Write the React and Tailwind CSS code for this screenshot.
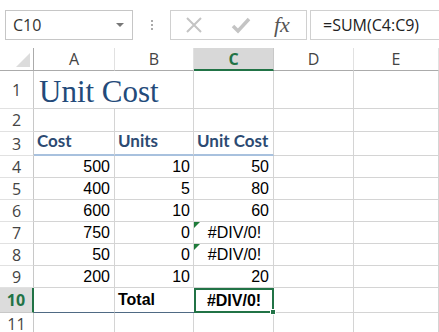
import React from 'react';

const GRID = 'border-r border-b border-[#d4d4d4]';
const NUM = "font-['Liberation_Sans',Arial,sans-serif] text-[16px] text-black";
const COLS = [
    { key: 'A', w: 'w-[81px]' },
    { key: 'B', w: 'w-[79px]' },
    { key: 'C', w: 'w-[80px]' },
    { key: 'D', w: 'w-[80px]' },
    { key: 'E', w: 'w-[85px]' },
];

const data = [
    ['500', '10', '50'],
    ['400', '5', '80'],
    ['600', '10', '60'],
    ['750', '0', '#DIV/0!'],
    ['50', '0', '#DIV/0!'],
    ['200', '10', '20'],
];

const RowHead = ({ n, h, active }) => (
    <div
        className={`${h} w-[34px] shrink-0 flex items-center justify-center border-b font-['Open_Sans',sans-serif] text-[16px] ${
            active
                ? 'bg-[#dcdcdc] text-[#217346] font-bold border-r-2 border-r-[#217346] border-b-[#c8c8c8]'
                : 'bg-white text-[#444] border-r border-[#c8c8c8] border-b-[#e1e1e1]'
        }`}
    >
        {n}
    </div>
);

const ErrTri = () => (
    <span className="absolute left-0 top-0 w-0 h-0 border-t-[6px] border-t-[#1e7b3a] border-r-[6px] border-r-transparent" />
);

export default function App() {
    return (
        <div className="w-[439px] h-[332px] overflow-hidden bg-white select-none">
            {/* formula bar */}
            <div className="h-[48px] flex items-start pt-[10px]">
                <div className="ml-[5px] w-[128px] h-[30px] border border-[#c6c6c6] flex items-center justify-between pl-[7px] pr-[8px]">
                    <span className="font-['Open_Sans',sans-serif] text-[16px] text-[#333]">C10</span>
                    <span className="w-0 h-0 border-l-[4px] border-r-[4px] border-t-[4px] border-l-transparent border-r-transparent border-t-[#777]" />
                </div>
                <div className="w-[37px] h-[30px] flex flex-col items-center justify-center gap-[2px]">
                    <span className="w-[2px] h-[2px] bg-[#aaa]" />
                    <span className="w-[2px] h-[2px] bg-[#aaa]" />
                    <span className="w-[2px] h-[2px] bg-[#aaa]" />
                </div>
                <div className="w-[137px] h-[30px] border border-[#d0d0d0] flex items-center">
                    <svg width="20" height="20" viewBox="0 0 20 20" className="ml-[13px]">
                        <path d="M3 3 L17 17 M17 3 L3 17" stroke="#c4c4c4" strokeWidth="2" fill="none" />
                    </svg>
                    <svg width="22" height="20" viewBox="0 0 22 20" className="ml-[26px]">
                        <path d="M3 11 L8 16 L19 4" stroke="#c4c4c4" strokeWidth="3.5" fill="none" />
                    </svg>
                    <span className="ml-[22px] font-['Liberation_Serif',serif] italic text-[22px] text-[#555] leading-none">
                        fx
                    </span>
                </div>
                <div className="ml-[3px] flex-1 h-[30px] border border-r-0 border-[#d0d0d0] flex items-center pl-[12px]">
                    <span className="font-['Open_Sans',sans-serif] text-[16px] text-[#222]">=SUM(C4:C9)</span>
                </div>
            </div>

            {/* column headers */}
            <div className="flex h-[23px]">
                <div className="w-[34px] shrink-0 relative border-r border-b border-[#ababab] bg-white">
                    <span className="absolute right-[3px] bottom-[3px] w-0 h-0 border-l-[14px] border-l-transparent border-b-[14px] border-b-[#dcdcdc]" />
                </div>
                {COLS.map((c) => (
                    <div
                        key={c.key}
                        className={`${c.w} shrink-0 flex items-center justify-center font-['Open_Sans',sans-serif] text-[16px] ${
                            c.key === 'C'
                                ? 'bg-[#d8d8d8] text-[#217346] font-bold border-b-2 border-b-[#217346] border-r border-r-[#c8c8c8]'
                                : 'bg-white text-[#444] border-r border-r-[#e1e1e1] border-b border-b-[#ababab]'
                        }`}
                    >
                        {c.key}
                    </div>
                ))}
            </div>

            {/* row 1 */}
            <div className="flex h-[38px]">
                <RowHead n="1" h="h-[38px]" />
                <div className="flex-1 flex">
                    <div className={`w-[81px] ${GRID} border-r-0 relative`}>
                        <span className="absolute left-[5px] bottom-[1px] whitespace-nowrap font-['Liberation_Serif',Cambria,serif] text-[31px] leading-none text-[#234a7a]">
                            Unit Cost
                        </span>
                    </div>
                    <div className={`w-[79px] ${GRID}`} />
                    <div className={`w-[80px] ${GRID}`} />
                    <div className={`w-[80px] ${GRID}`} />
                    <div className={`w-[85px] ${GRID}`} />
                </div>
            </div>

            {/* row 2 */}
            <div className="flex h-[23px]">
                <RowHead n="2" h="h-[23px]" />
                {COLS.map((c) => (
                    <div key={c.key} className={`${c.w} ${GRID}`} />
                ))}
            </div>

            {/* row 3 */}
            <div className="flex h-[24px]">
                <RowHead n="3" h="h-[24px]" />
                {['Cost', 'Units', 'Unit Cost'].map((t, i) => (
                    <div
                        key={t}
                        className={`${COLS[i].w} border-r border-r-[#d4d4d4] border-b-2 border-b-[#a8c1de] flex items-end pb-[1px] pl-[3px] font-['Lato',sans-serif] font-bold text-[17px] text-[#2c4a72]`}
                    >
                        {t}
                    </div>
                ))}
                <div className={`w-[80px] ${GRID}`} />
                <div className={`w-[85px] ${GRID}`} />
            </div>

            {/* rows 4-9 */}
            {data.map((r, i) => (
                <div key={i} className="flex h-[22px]">
                    <RowHead n={String(i + 4)} h="h-[22px]" />
                    <div className={`w-[81px] ${GRID} flex items-center justify-end pr-[4px] ${NUM}`}>{r[0]}</div>
                    <div className={`w-[79px] ${GRID} flex items-center justify-end pr-[3px] ${NUM}`}>{r[1]}</div>
                    <div
                        className={`w-[80px] ${GRID} relative flex items-center ${
                            r[2].startsWith('#') ? 'justify-center pl-[2px]' : 'justify-end pr-[4px]'
                        } ${NUM}`}
                    >
                        {r[2].startsWith('#') && <ErrTri />}
                        {r[2]}
                    </div>
                    <div className={`w-[80px] ${GRID}`} />
                    <div className={`w-[85px] ${GRID}`} />
                </div>
            ))}

            {/* row 10 */}
            <div className="flex h-[25px]">
                <RowHead n="10" h="h-[25px]" active />
                <div className="w-[81px] border-b border-b-[#4f6a84] border-r border-r-[#d4d4d4]" />
                <div className="w-[79px] border-b border-b-[#4f6a84] flex items-center pl-[3px] font-['Liberation_Sans',Arial,sans-serif] font-bold text-[16px] text-black">
                    Total
                </div>
                <div className="w-[80px] relative border-2 border-[#217346] flex items-center justify-center font-['Liberation_Sans',Arial,sans-serif] font-bold text-[16px] text-black">
                    #DIV/0!
                    <span className="absolute right-[-4px] bottom-[-4px] w-[6px] h-[6px] bg-[#217346] border border-white" />
                </div>
                <div className={`w-[80px] ${GRID}`} />
                <div className={`w-[85px] ${GRID}`} />
            </div>

            {/* row 11 */}
            <div className="flex h-[22px]">
                <RowHead n="11" h="h-[22px]" />
                {COLS.map((c) => (
                    <div key={c.key} className={`${c.w} ${GRID}`} />
                ))}
            </div>
        </div>
    );
}
